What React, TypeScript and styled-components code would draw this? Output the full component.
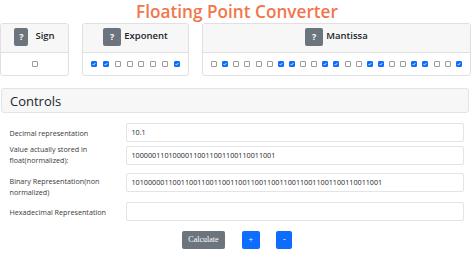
import React from 'react';
import styled, { createGlobalStyle } from 'styled-components';

const GlobalStyle = createGlobalStyle`
  body {
    margin: 0;
    background: #fff;
    font-family: 'Open Sans', 'Noto Sans', sans-serif;
    color: #212529;
  }
`;

const Page = styled.div`
  width: 474px;
  height: 269px;
  overflow: hidden;
`;

const Title = styled.h1`
  margin: 1px 0 0;
  height: 22px;
  line-height: 22px;
  text-align: center;
  font-size: 17.2px;
  font-weight: 600;
  color: #f2764a;
`;

const BitsRow = styled.div`
  display: grid;
  grid-template-columns: 69px 107px 269px;
  column-gap: 13px;
`;

const Card = styled.div`
  border: 1px solid #e0e0e0;
  border-radius: 3px;
  overflow: hidden;
  background: #fff;
`;

const CardHeader = styled.div<{ $gap: number }>`
  height: 28px;
  display: flex;
  align-items: center;
  justify-content: center;
  gap: ${p => p.$gap}px;
  background: #f7f7f7;
  border-bottom: 1px solid #e0e0e0;
`;

const HelpButton = styled.span<{ $w: number }>`
  width: ${p => p.$w}px;
  height: 18px;
  display: flex;
  align-items: center;
  justify-content: center;
  background: #6c757d;
  border-radius: 2px;
  color: #fff;
  font-size: 9px;
  font-weight: 700;
  margin-bottom: 3px;
`;

const FieldName = styled.span`
  font-size: 9.5px;
  font-weight: 600;
  color: #212529;
  margin-bottom: 6px;
`;

const CardBody = styled.div<{ $single?: boolean }>`
  height: 22px;
  display: flex;
  align-items: center;
  justify-content: ${p => (p.$single ? 'center' : 'space-between')};
  padding: 0 8px;
`;

const Box = styled.span<{ $on: boolean }>`
  box-sizing: border-box;
  width: 6px;
  height: 6px;
  border: 1px solid ${p => (p.$on ? '#0d6efd' : '#9a9a9a')};
  border-radius: 1px;
  background: ${p => (p.$on ? '#0d6efd' : '#fff')};
  display: flex;
  align-items: center;
  justify-content: center;
`;

const ControlsHeader = styled.div`
  margin: 12px 5px 0 1px;
  height: 23px;
  border: 1px solid #e3e3e3;
  border-radius: 3px;
  background: #f7f7f7;
  display: flex;
  align-items: center;
  padding-left: 8px;
  font-size: 13px;
  font-weight: 500;
  color: #212529;
`;

const Form = styled.div`
  padding-left: 9.5px;
`;

const Row = styled.div<{ $mt: number }>`
  display: grid;
  grid-template-columns: 116px 338px;
  align-items: start;
  margin-top: ${p => p.$mt}px;
`;

const Label = styled.div<{ $mt: number }>`
  margin-top: ${p => p.$mt}px;
  font-size: 7.2px;
  line-height: 11px;
  color: #3a3a3a;
  padding-right: 8px;
`;

const Field = styled.input`
  box-sizing: border-box;
  width: 338px;
  height: 18.5px;
  margin: 0;
  padding: 0 5px;
  border: 1px solid #e2e4e7;
  border-radius: 2px;
  font-family: 'Open Sans', 'Noto Sans', sans-serif;
  font-size: 7.2px;
  color: #212529;
  background: #fff;
  outline: none;
`;

const Actions = styled.div`
  margin-top: 10.5px;
  display: flex;
  justify-content: center;
  gap: 16.4px;
`;

const Button = styled.button<{ $tone: 'gray' | 'blue' }>`
  height: 17.8px;
  padding: 0 6.8px;
  border: none;
  border-radius: 2px;
  background: ${p => (p.$tone === 'gray' ? '#6c757d' : '#0d6efd')};
  color: #fff;
  font-family: 'Liberation Serif', serif;
  font-size: 8px;
  line-height: 1;
`;

function Bit({ on }: { on: boolean }) {
  return (
    <Box $on={on}>
      {on && (
        <svg width="4" height="4" viewBox="0 0 8 8">
          <path d="M1.2 4.2 L3.2 6.2 L6.8 1.8" fill="none" stroke="#fff" strokeWidth="1.6" />
        </svg>
      )}
    </Box>
  );
}

function BitCard({ name, bits, help, gap }: { name: string; bits: string; help: number; gap: number }) {
  return (
    <Card>
      <CardHeader $gap={gap}>
        <HelpButton $w={help}>?</HelpButton>
        <FieldName>{name}</FieldName>
      </CardHeader>
      <CardBody $single={bits.length === 1}>
        {bits.split('').map((b, i) => (
          <Bit key={i} on={b === '1'} />
        ))}
      </CardBody>
    </Card>
  );
}

const rows = [
  { label: 'Decimal representation', value: '10.1', mt: 10, lmt: 4.5 },
  { label: 'Value actually stored in float(normalized):', value: '10000011010000110011001100110011001', mt: 4.7, lmt: -2 },
  { label: 'Binary Representation(non normalized)', value: '1010000011001100110011001100110011001100110011001100110011001', mt: 7, lmt: 2.5 },
  { label: 'Hexadecimal Representation', value: '', mt: 4.5, lmt: 4.5 },
];

export default function App() {
  return (
    <Page>
      <GlobalStyle />
      <Title>Floating Point Converter</Title>
      <BitsRow>
        <BitCard name="Sign" bits="0" help={14} gap={7} />
        <BitCard name="Exponent" bits="11000001" help={18} gap={3} />
        <BitCard name="Mantissa" bits="01000011001100110011001" help={18} gap={3} />
      </BitsRow>
      <ControlsHeader>Controls</ControlsHeader>
      <Form>
        {rows.map(r => (
          <Row key={r.label} $mt={r.mt}>
            <Label $mt={r.lmt}>{r.label}</Label>
            <Field readOnly value={r.value} />
          </Row>
        ))}
      </Form>
      <Actions>
        <Button $tone="gray">Calculate</Button>
        <Button $tone="blue">+</Button>
        <Button $tone="blue">-</Button>
      </Actions>
    </Page>
  );
}
